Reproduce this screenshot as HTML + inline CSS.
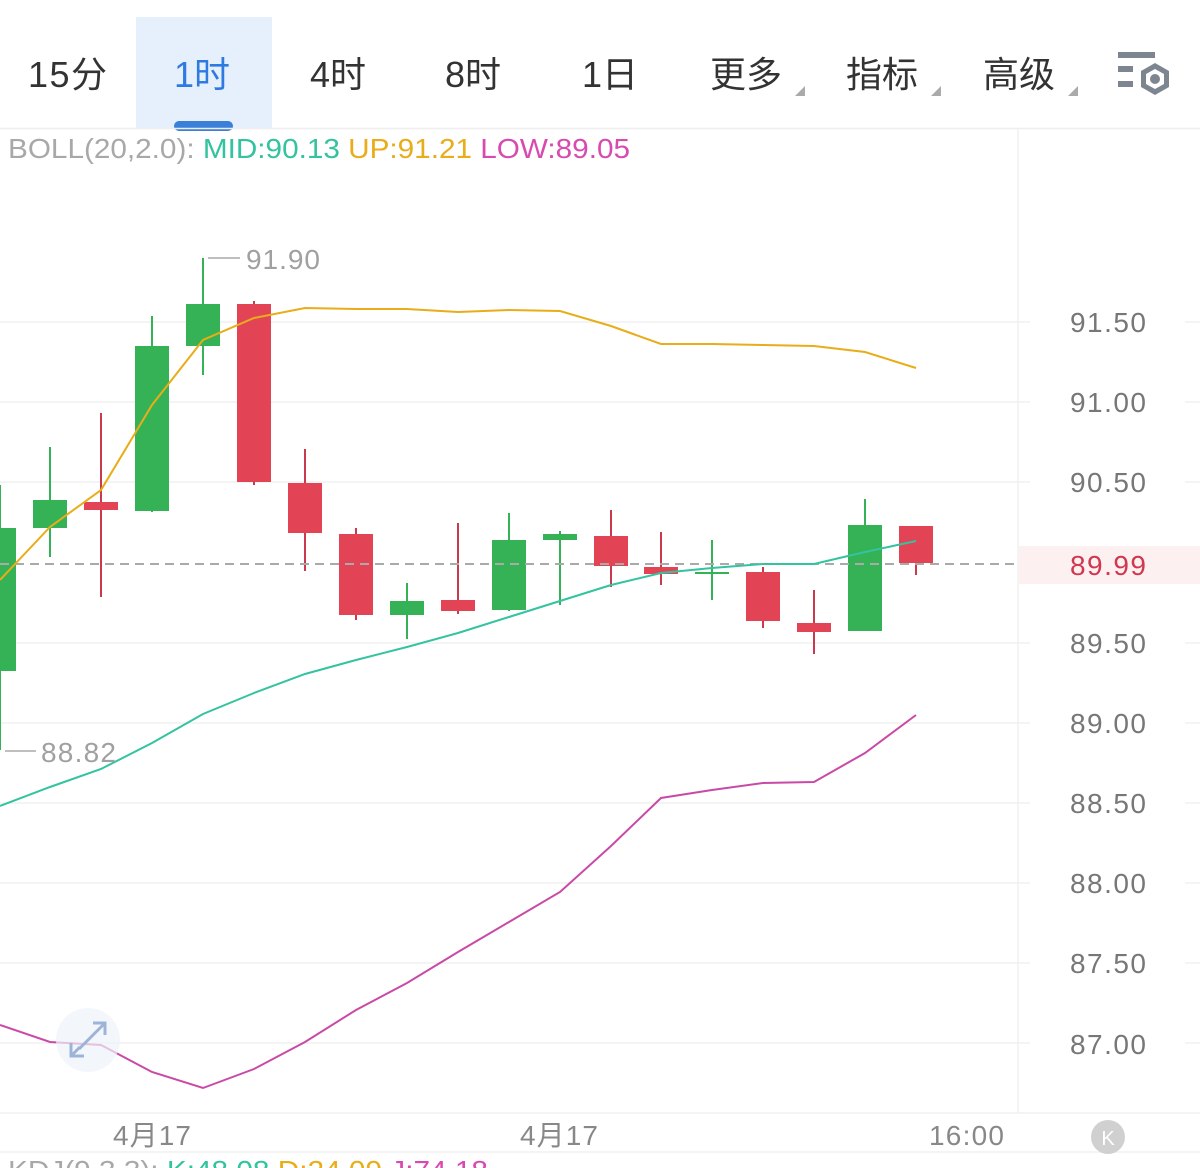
<!DOCTYPE html>
<html><head><meta charset="utf-8">
<style>
html,body{margin:0;padding:0;background:#fff;width:1200px;height:1168px;overflow:hidden;font-family:"Liberation Sans","Noto Sans CJK SC",sans-serif;}
</style></head><body>
<svg width="1200" height="1168" viewBox="0 0 1200 1168" xmlns="http://www.w3.org/2000/svg" style="position:absolute;left:0;top:0;font-family:'Liberation Sans','Noto Sans CJK SC',sans-serif">
<rect x="136" y="17" width="136" height="111" fill="#e6f0fc"/>
<rect x="174" y="121" width="59" height="10" rx="5" fill="#3a7fd8"/>
<line x1="0" y1="128.5" x2="1200" y2="128.5" stroke="#eee" stroke-width="1.5"/>
<g font-size="36" fill="#333">
<text x="28" y="87" textLength="79">15分</text>
<text x="174" y="87" fill="#2f7ae0">1时</text>
<text x="310" y="87">4时</text>
<text x="445" y="87">8时</text>
<text x="582" y="87">1日</text>
<text x="710" y="87">更多</text>
<text x="846" y="87">指标</text>
<text x="983" y="87">高级</text>
</g>
<g fill="#aaa">
<polygon points="795,96 805,86 805,96"/>
<polygon points="931,96 941,86 941,96"/>
<polygon points="1068,96 1078,86 1078,96"/>
</g>
<g fill="#7d8591">
<rect x="1118" y="52" width="37" height="6"/>
<rect x="1118" y="66" width="15" height="6"/>
<rect x="1118" y="81" width="15" height="6"/>
<polygon points="1155,63 1169,71 1169,87 1155,95 1141,87 1141,71"/>
<polygon points="1155,69 1164,74 1164,84 1155,89 1146,84 1146,74" fill="#fff"/>
<circle cx="1155" cy="79" r="5"/>
</g>
<text x="8" y="158" font-size="28" textLength="622" lengthAdjust="spacingAndGlyphs"><tspan fill="#a8a8a8">BOLL(20,2.0): </tspan><tspan fill="#33c39f">MID:90.13 </tspan><tspan fill="#e8ad18">UP:91.21 </tspan><tspan fill="#d94ab0">LOW:89.05</tspan></text>
<line x1="1018" y1="129" x2="1018" y2="1113" stroke="#f0f0f0" stroke-width="1.5"/>
<g stroke="#f0f0f0" stroke-width="1.5">
<line x1="0" y1="322" x2="1030" y2="322"/><line x1="1185" y1="322" x2="1200" y2="322"/>
<line x1="0" y1="402" x2="1030" y2="402"/><line x1="1185" y1="402" x2="1200" y2="402"/>
<line x1="0" y1="482" x2="1030" y2="482"/><line x1="1185" y1="482" x2="1200" y2="482"/>
<line x1="0" y1="643" x2="1030" y2="643"/><line x1="1185" y1="643" x2="1200" y2="643"/>
<line x1="0" y1="723" x2="1030" y2="723"/><line x1="1185" y1="723" x2="1200" y2="723"/>
<line x1="0" y1="803" x2="1030" y2="803"/><line x1="1185" y1="803" x2="1200" y2="803"/>
<line x1="0" y1="883" x2="1030" y2="883"/><line x1="1185" y1="883" x2="1200" y2="883"/>
<line x1="0" y1="963" x2="1030" y2="963"/><line x1="1185" y1="963" x2="1200" y2="963"/>
<line x1="0" y1="1043" x2="1030" y2="1043"/><line x1="1185" y1="1043" x2="1200" y2="1043"/>
<line x1="0" y1="1113" x2="1200" y2="1113"/>
<line x1="0" y1="1152" x2="1200" y2="1152"/>
</g>
<rect x="1019" y="546" width="181" height="38" fill="#fdf0f0"/>
<g font-size="28" fill="#777">
<text x="1070" y="332" textLength="76">91.50</text>
<text x="1070" y="412" textLength="76">91.00</text>
<text x="1070" y="492" textLength="76">90.50</text>
<text x="1070" y="575" textLength="76" fill="#d0384f">89.99</text>
<text x="1070" y="653" textLength="76">89.50</text>
<text x="1070" y="733" textLength="76">89.00</text>
<text x="1070" y="813" textLength="76">88.50</text>
<text x="1070" y="893" textLength="76">88.00</text>
<text x="1070" y="973" textLength="76">87.50</text>
<text x="1070" y="1054" textLength="76">87.00</text>
</g>
<g stroke-width="2">
<g fill="#35b255" stroke="#35b255">
<line x1="0" y1="485" x2="0" y2="750"/><rect x="0" y="528" width="16" height="143" stroke="none"/>
<line x1="50" y1="447" x2="50" y2="557"/><rect x="33" y="500" width="34" height="28" stroke="none"/>
<line x1="152" y1="316" x2="152" y2="512"/><rect x="135" y="346" width="34" height="165" stroke="none"/>
<line x1="203" y1="258" x2="203" y2="375"/><rect x="186" y="304" width="34" height="42" stroke="none"/>
<line x1="407" y1="583" x2="407" y2="639"/><rect x="390" y="601" width="34" height="14" stroke="none"/>
<line x1="509" y1="513" x2="509" y2="611"/><rect x="492" y="540" width="34" height="70" stroke="none"/>
<line x1="560" y1="531" x2="560" y2="605"/><rect x="543" y="534" width="34" height="6" stroke="none"/>
<line x1="712" y1="540" x2="712" y2="600"/><rect x="695" y="572" width="34" height="2" stroke="none"/>
<line x1="865" y1="499" x2="865" y2="631"/><rect x="848" y="525" width="34" height="106" stroke="none"/>
</g>
<g fill="#e24456" stroke="#c93a4c">
<line x1="101" y1="413" x2="101" y2="597"/><rect x="84" y="502" width="34" height="8" stroke="none"/>
<line x1="254" y1="301" x2="254" y2="485"/><rect x="237" y="304" width="34" height="178" stroke="none"/>
<line x1="305" y1="449" x2="305" y2="571"/><rect x="288" y="483" width="34" height="50" stroke="none"/>
<line x1="356" y1="528" x2="356" y2="620"/><rect x="339" y="534" width="34" height="81" stroke="none"/>
<line x1="458" y1="523" x2="458" y2="614"/><rect x="441" y="600" width="34" height="11" stroke="none"/>
<line x1="611" y1="510" x2="611" y2="587"/><rect x="594" y="536" width="34" height="30" stroke="none"/>
<line x1="661" y1="532" x2="661" y2="585"/><rect x="644" y="567" width="34" height="7" stroke="none"/>
<line x1="763" y1="567" x2="763" y2="628"/><rect x="746" y="572" width="34" height="49" stroke="none"/>
<line x1="814" y1="590" x2="814" y2="654"/><rect x="797" y="623" width="34" height="9" stroke="none"/>
<line x1="916" y1="526" x2="916" y2="575"/><rect x="899" y="526" width="34" height="37" stroke="none"/>
</g>
</g>
<line x1="0" y1="564" x2="1015" y2="564" stroke="#aaa" stroke-width="2" stroke-dasharray="9,6"/>
<polyline fill="none" stroke="#e8ad18" stroke-width="2" points="0,580 50,527 101,490 152,405 203,340 254,318 305,308 356,309 407,309 458,312 509,310 560,311 611,326 661,344 712,344 763,345 814,346 865,352 916,368"/>
<polyline fill="none" stroke="#33c39f" stroke-width="2" points="0,806 50,787 101,769 152,743 203,714 254,693 305,674 356,660 407,647 458,633 509,617 560,601 611,585 661,573 712,568 763,564 814,564 865,552 916,541"/>
<polyline fill="none" stroke="#c94aa6" stroke-width="2" points="0,1025 50,1042 101,1045 152,1072 203,1088 254,1069 305,1042 356,1010 407,983 458,952 509,922 560,892 611,846 661,798 712,790 763,783 814,782 865,753 916,715"/>
<line x1="208" y1="258" x2="240" y2="258" stroke="#aaa" stroke-width="1.5"/>
<text x="246" y="269" font-size="28" fill="#a0a0a0" textLength="74">91.90</text>
<line x1="5" y1="751" x2="36" y2="751" stroke="#aaa" stroke-width="1.5"/>
<text x="41" y="762" font-size="28" fill="#a0a0a0" textLength="75">88.82</text>
<circle cx="88" cy="1040" r="32" fill="#eef3fb" opacity="0.7"/>
<g stroke="#9db3d8" stroke-width="3" fill="none">
<line x1="79" y1="1049" x2="105" y2="1023"/>
<polyline points="93,1023 105,1023 105,1035"/>
<polyline points="71,1043 71,1056 84,1056"/>
<line x1="71" y1="1056" x2="80" y2="1047"/>
</g>
<g font-size="28" fill="#888">
<text x="113" y="1145" textLength="78">4月17</text>
<text x="520" y="1145" textLength="78">4月17</text>
<text x="929" y="1145" textLength="75">16:00</text>
</g>
<circle cx="1108" cy="1137" r="17" fill="#d0d0d0"/>
<text x="1108" y="1145" font-size="20" fill="#fff" text-anchor="middle">K</text>
<text x="8" y="1180" font-size="28" textLength="480" lengthAdjust="spacingAndGlyphs"><tspan fill="#a8a8a8">KDJ(9,3,3): </tspan><tspan fill="#33c39f">K:48.08 </tspan><tspan fill="#e8ad18">D:24.09 </tspan><tspan fill="#d94ab0">J:74.18</tspan></text>
</svg>
</body></html>
